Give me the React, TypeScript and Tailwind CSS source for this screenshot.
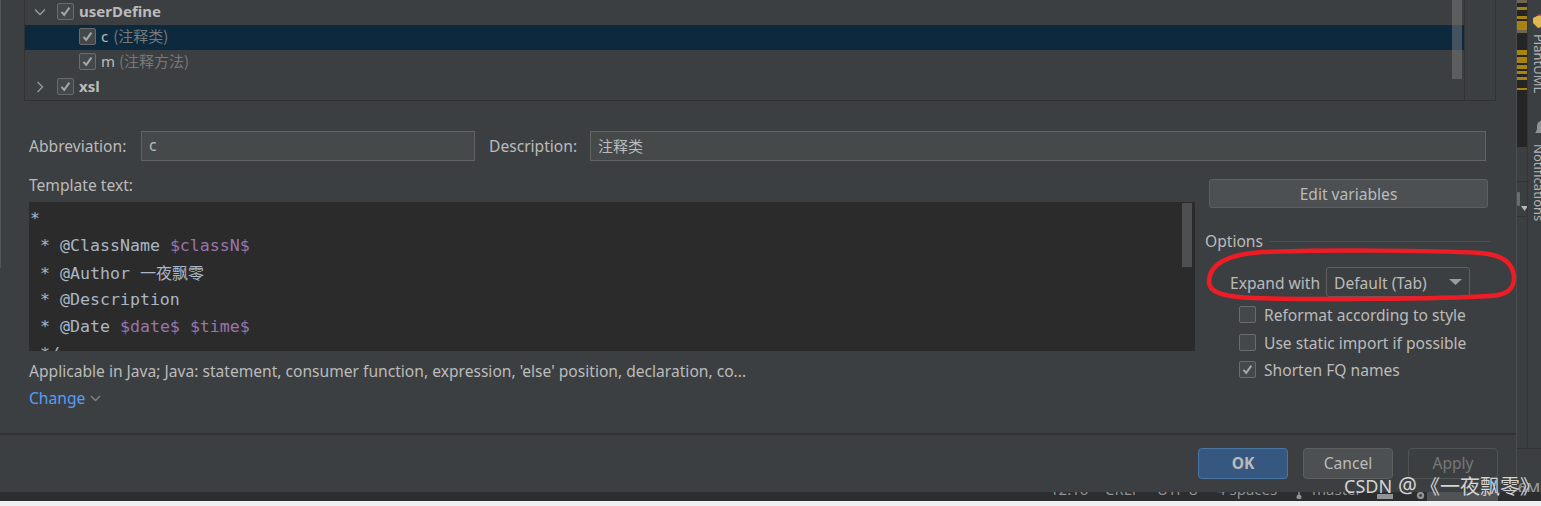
import React from "react";

const ui = "font-['Noto_Sans','Open_Sans',sans-serif]";

function Check({ checked = true }: { checked?: boolean }) {
  return (
    <span className="flex h-[17px] w-[17px] shrink-0 items-center justify-center rounded-[2px] border border-[#6b6b6b] bg-[#43494a]">
      {checked && (
        <svg width="13" height="13" viewBox="0 0 13 13" fill="none">
          <path d="M2.5 6.8 L5.2 9.8 L10.4 2.6" stroke="#a7a7a7" strokeWidth="2" />
        </svg>
      )}
    </span>
  );
}

function Chevron({ open }: { open: boolean }) {
  return (
    <svg width="12" height="12" viewBox="0 0 12 12" fill="none" className="shrink-0">
      {open ? <path d="M1 3.5 L6 8.5 L11 3.5" stroke="#9a9da0" strokeWidth="1.3" /> : <path d="M3.5 1 L8.5 6 L3.5 11" stroke="#9a9da0" strokeWidth="1.3" />}
    </svg>
  );
}

function Group({ open, label }: { open: boolean; label: string }) {
  return (
    <div className="flex h-[25px] items-center pb-[2px] pl-[9px]">
      <Chevron open={open} />
      <span className="ml-[11px]"><Check /></span>
      <span className="ml-[5px] text-[15px] font-bold text-[#bbbbbb]">{label}</span>
    </div>
  );
}

function Item({ name, note, selected }: { name: string; note: string; selected?: boolean }) {
  return (
    <div className={`flex h-[25px] items-center pb-[2px] pl-[54px] ${selected ? "bg-[#0d293e]" : ""}`}>
      <Check />
      <span className="ml-[5px] text-[15px] text-[#bbbbbb]">{name}</span>
      <span className={`${selected ? "ml-[5px]" : "ml-[4px]"} font-['Noto_Sans_CJK_SC',sans-serif] text-[15px] text-[#787878]`}>{note}</span>
    </div>
  );
}

function Opt({ label, checked }: { label: string; checked?: boolean }) {
  return (
    <div className="flex h-[27.5px] items-center pl-[34px]">
      <Check checked={!!checked} />
      <span className="ml-[8px] pt-[2px] text-[#bbbbbb]">{label}</span>
    </div>
  );
}

function Code({ children }: { children: React.ReactNode }) {
  return <div className="h-[27px] whitespace-pre leading-[27px]">{children}</div>;
}

const Var = ({ children }: { children: React.ReactNode }) => <span className="text-[#9876aa]">{children}</span>;

const marks: [number, number][] = [
  [7, 3], [16, 3], [21, 9], [50, 5], [57, 6], [65, 4], [71, 3], [77, 3], [88, 2],
];

export default function App() {
  return (
    <div className={`relative flex h-[506px] w-[1541px] flex-col overflow-hidden bg-[#f0f0f0] text-[15.6px] ${ui}`}>
      <div className="flex h-[501px] bg-[#3c3f41]">
        <div className="flex w-[1517px] shrink-0 flex-col">
          {/* dialog */}
          <div className="relative z-10 flex h-[492px] flex-col border-r border-r-[#4a4d4f] bg-[#3c3f41]">
            <div className="absolute left-0 top-0 h-[268px] w-[1px] bg-[#53565a]" />
            <div className="ml-[24px] mr-[20px] flex h-[101px] shrink-0 border-x border-b border-[#323232]">
              <div className="relative flex-1">
                <Group open label="userDefine" />
                <Item name="c" note="(注释类)" selected />
                <Item name="m" note="(注释方法)" />
                <Group open={false} label="xsl" />
                <div className="absolute right-[2px] top-0 h-[79px] w-[10px] bg-[#797b7d]/50" />
              </div>
              <div className="w-[31px] border-l border-[#323232]" />
            </div>

            <div className="mt-[30px] flex h-[30px] shrink-0 items-center pl-[29px] pr-[30px] text-[#bbbbbb]">
              <span className="w-[112px] pt-[2px]">Abbreviation:</span>
              <div className="flex h-[30px] w-[334px] items-center border border-[#646464] bg-[#45494a] pl-[7px]">c</div>
              <span className="ml-[14px] w-[101px] pt-[2px]">Description:</span>
              <div className="flex h-[30px] flex-1 items-center border border-[#646464] bg-[#45494a] pl-[7px] font-['Noto_Sans_CJK_SC',sans-serif] text-[15px]">注释类</div>
            </div>

            <div className="mt-[14px] flex h-[237px] shrink-0 pl-[29px] pr-[26px]">
              <div className="w-[1166px] shrink-0">
                <div className="h-[27px] leading-[21px] text-[#bbbbbb]">Template text:</div>
                <div className="relative h-[149px] overflow-hidden bg-[#2b2b2b] pl-[1px] pt-[3px] font-['DejaVu_Sans_Mono','Noto_Sans_CJK_SC',monospace] text-[16.6px] text-[#a9b7c6]">
                  <Code>*</Code>
                  <Code> * @ClassName <Var>$classN$</Var></Code>
                  <Code> * @Author <span className="font-['Noto_Sans_CJK_SC',sans-serif] text-[16px]">一夜飘零</span></Code>
                  <Code> * @Description</Code>
                  <Code> * @Date <Var>$date$</Var> <Var>$time$</Var></Code>
                  <Code> */</Code>
                  <div className="absolute right-[3px] top-[1px] h-[64px] w-[10px] bg-[#4d4f50]" />
                </div>
                <div className="mt-[7px] h-[27px] whitespace-nowrap leading-[27px] text-[#bbbbbb]">Applicable in Java; Java: statement, consumer function, expression, 'else' position, declaration, co...</div>
                <div className="flex h-[27px] items-center gap-[5px] text-[#589df6]">
                  <span>Change</span>
                  <svg width="11" height="7" viewBox="0 0 11 7" fill="none"><path d="M1 1 L5.5 5.5 L10 1" stroke="#7f8386" strokeWidth="1.4" /></svg>
                </div>
              </div>
              <div className="ml-[10px] flex-1 text-[#bbbbbb]">
                <div className="ml-[4px] mr-[2px] mt-[4px] flex h-[29px] items-center justify-center rounded-[3px] border border-[#5e6060] bg-[#4c5052] pt-[2px]">Edit variables</div>
                <div className="mt-[22px] flex h-[22px] items-center">
                  <span className="pt-[2px]">Options</span>
                  <div className="ml-[7px] h-[1px] flex-1 bg-[#515151]" />
                </div>
                <div className="mt-[15px] flex h-[30px] items-center pl-[25px]">
                  <span className="w-[96px] whitespace-nowrap pt-[3px]">Expand with</span>
                  <div className="flex h-[30px] w-[144px] items-center justify-between rounded-[3px] border border-[#5e6060] pl-[7px] pr-[7px]">
                    <span className="pt-[3px]">Default (Tab)</span>
                    <svg width="13" height="6" viewBox="0 0 13 6"><path d="M0 0 H13 L6.5 6 Z" fill="#9a9da0" /></svg>
                  </div>
                </div>
                <div className="mt-[4px]">
                  <Opt label="Reformat according to style" />
                  <Opt label="Use static import if possible" />
                  <Opt label="Shorten FQ names" checked />
                </div>
              </div>
            </div>

            <div className="mt-[21px] h-[2px] shrink-0 bg-[#323232]" />
            <div className="flex flex-1 items-start justify-end gap-[15px] pr-[18px] pt-[13px]">
              <div className="flex h-[31px] w-[90px] items-center justify-center rounded-[4px] border border-[#4a76a3] bg-[#365880] font-bold text-[#bbbbbb]">OK</div>
              <div className="flex h-[31px] w-[90px] items-center justify-center rounded-[4px] border border-[#5e6060] bg-[#4c5052] text-[#bbbbbb]">Cancel</div>
              <div className="flex h-[31px] w-[90px] items-center justify-center rounded-[4px] border border-[#515455] text-[#777777]">Apply</div>
            </div>
          </div>

          {/* status bar, mostly behind the dialog */}
          <div className="h-[9px] overflow-hidden bg-[#2b2d2f] text-[15px] text-[#8f9296]">
            <div className="-mt-[13px] flex h-[20px] items-center whitespace-nowrap pl-[1050px]">
              <span className="w-[55px] shrink-0">12:16</span>
              <span className="w-[52px] shrink-0">CRLF</span>
              <span className="w-[60px] shrink-0">UTF-8</span>
              <span className="w-[78px] shrink-0">4 spaces</span>
              <span className="w-[17px] shrink-0">
                <svg width="8" height="20" viewBox="0 0 8 20"><path d="M4 13 V19" stroke="#8f9296" strokeWidth="1.5" /><circle cx="4" cy="18" r="2.5" fill="#8f9296" /></svg>
              </span>
              <span className="w-[65px] shrink-0">master</span>
              <span className="mt-[14px] h-[5px] w-[16px] shrink-0 bg-[#8f9296]" />
              <span className="ml-[23px] w-[11px] shrink-0">
                <svg width="9" height="20" viewBox="0 0 9 20"><circle cx="4.5" cy="16.5" r="2.5" fill="none" stroke="#8f9296" strokeWidth="2.4" /></svg>
              </span>
              <span className="h-[40px] w-[71px] shrink-0 bg-[#505355]" />
            </div>
          </div>
        </div>

        {/* right tool strip */}
        <div className="flex flex-1 flex-col">
          <div className="flex h-[449px] shrink-0 border-b border-[#323232]">
            <div className="w-[10px] shrink-0">
              <div className="relative h-[147px] bg-[#252525]">
                <div className="h-[3px] bg-[#6e6653]" />
                <div className="absolute left-0 right-0 top-[30px] h-[3px] bg-[#6e6653]" />
                {marks.map(([t, h]) => (
                  <div key={t} className="absolute left-0 right-0 bg-[#a8830f]" style={{ top: t, height: h }} />
                ))}
              </div>
              <div className="h-[35px] border-b border-[#323232]" />
              <div className="flex h-[35px] items-start border-b border-[#323232] pt-[10px]">
                <div className="h-[14px] w-[3px] shrink-0 rounded-[1px] bg-[#6a6d70]" />
                <svg className="ml-[1px] mt-[14px] shrink-0" width="7" height="5" viewBox="0 0 7 5"><path d="M0 0 H7 L3.5 5 Z" fill="#b4b6b8" /></svg>
              </div>
            </div>
            <div className="flex flex-1 flex-col items-start overflow-hidden border-l border-[#333537] pl-[4px] pt-[13px] text-[13px] leading-[14px] text-[#aeb4b8]">
              <svg className="shrink-0" width="14" height="15" viewBox="0 0 14 15">
                <path d="M1 5 L9 1 L14 3 V13 L6 15 L1 10 Z" fill="#e0b84f" />
                <path d="M5 2 L10 0 L14 2 V6 L9 3 Z" fill="#8b4560" />
              </svg>
              <span className="mt-[6px] whitespace-nowrap [writing-mode:vertical-rl]">PlantUML</span>
              <svg className="ml-[2px] mt-[28px] shrink-0" width="14" height="14" viewBox="0 0 14 14">
                <path d="M1 12 C3 10 3 8 3 6 C3 2 5 0 7 0 C9 0 11 2 11 6 C11 8 11 10 13 12 Z" fill="#8f9296" />
              </svg>
              <span className="mt-[9px] whitespace-nowrap [writing-mode:vertical-rl]">Notifications</span>
            </div>
          </div>
          <div className="h-[29px] shrink-0" />
          <div className="h-[14px] shrink-0 whitespace-nowrap pl-[1px] text-[15px] leading-[18px] text-[#a0a3a6]">6M</div>
          <div className="h-[9px] shrink-0 bg-[#2b2d2f]" />
        </div>
      </div>

      {/* annotation: red ellipse drawn over the screenshot */}
      <svg className="absolute left-[1200px] top-[245px] z-20" width="325" height="62" viewBox="0 0 325 62" fill="none">
        <path d="M62 7 C120 5 230 5 280 8 C305 10 313 19 314 32 C314 43 309 50 290 51 C240 54 110 55 55 53 C22 52 9 47 9 37 C9 23 20 10 62 7 Z" stroke="#ee1c25" strokeWidth="4.5" />
      </svg>

      {/* watermark */}
      <div className="absolute left-[1344px] top-[473px] z-20 flex h-[26px] items-center whitespace-nowrap text-[18px] text-[#d4d4d4]">
        <span>CSDN</span>
        <span className="ml-[6px] text-[21px]">@</span>
        <span className="ml-[3px] font-['Noto_Sans_CJK_SC',sans-serif] text-[20px]">《一夜飘零》</span>
      </div>
    </div>
  );
}
